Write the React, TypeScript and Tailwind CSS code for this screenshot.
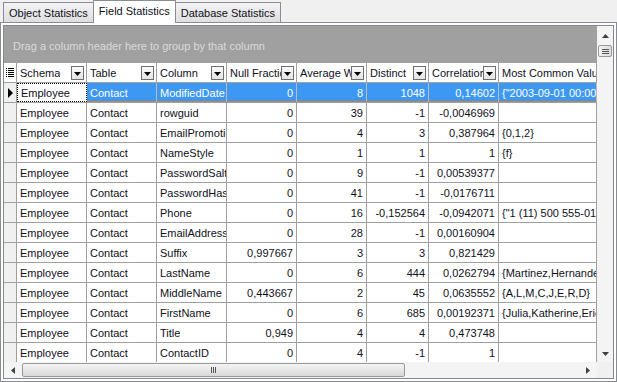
import React from 'react'

type Col = { key: string; title: string; w: string; right?: boolean }

const columns: Col[] = [
  { key: 'schema', title: 'Schema', w: 'w-[70px]' },
  { key: 'table', title: 'Table', w: 'w-[70px]' },
  { key: 'column', title: 'Column', w: 'w-[70px]' },
  { key: 'nullf', title: 'Null Fraction', w: 'w-[70px]', right: true },
  { key: 'avg', title: 'Average Width', w: 'w-[70px]', right: true },
  { key: 'distinct', title: 'Distinct', w: 'w-[62px]', right: true },
  { key: 'corr', title: 'Correlation', w: 'w-[70px]', right: true },
  { key: 'mcv', title: 'Most Common Values', w: 'w-[98px]' },
]

const rows: string[][] = [
  ['Employee', 'Contact', 'ModifiedDate', '0', '8', '1048', '0,14602', '{"2003-09-01 00:00:00"}'],
  ['Employee', 'Contact', 'rowguid', '0', '39', '-1', '-0,0046969', ''],
  ['Employee', 'Contact', 'EmailPromotion', '0', '4', '3', '0,387964', '{0,1,2}'],
  ['Employee', 'Contact', 'NameStyle', '0', '1', '1', '1', '{f}'],
  ['Employee', 'Contact', 'PasswordSalt', '0', '9', '-1', '0,00539377', ''],
  ['Employee', 'Contact', 'PasswordHash', '0', '41', '-1', '-0,0176711', ''],
  ['Employee', 'Contact', 'Phone', '0', '16', '-0,152564', '-0,0942071', '{"1 (11) 500 555-0110"}'],
  ['Employee', 'Contact', 'EmailAddress', '0', '28', '-1', '0,00160904', ''],
  ['Employee', 'Contact', 'Suffix', '0,997667', '3', '3', '0,821429', ''],
  ['Employee', 'Contact', 'LastName', '0', '6', '444', '0,0262794', '{Martinez,Hernandez}'],
  ['Employee', 'Contact', 'MiddleName', '0,443667', '2', '45', '0,0635552', '{A,L,M,C,J,E,R,D}'],
  ['Employee', 'Contact', 'FirstName', '0', '6', '685', '0,00192371', '{Julia,Katherine,Eric}'],
  ['Employee', 'Contact', 'Title', '0,949', '4', '4', '0,473748', ''],
  ['Employee', 'Contact', 'ContactID', '0', '4', '-1', '1', ''],
]

function DropButton() {
  return (
    <div className="ml-auto mr-[2px] flex h-[14px] w-[13px] shrink-0 items-end justify-center border border-[#6f6f6f] bg-gradient-to-b from-[#fafafa] to-[#e4e4e4] pb-[3px]">
      <svg width="7" height="4" viewBox="0 0 7 4">
        <path d="M0 0h7L3.5 4z" fill="#000" />
      </svg>
    </div>
  )
}

function Tab({ label, active }: { label: string; active?: boolean }) {
  return active ? (
    <div className="relative z-10 -mb-px flex h-[23px] items-start border border-b-0 border-[#898c95] bg-white px-[5px] pt-[5px]">
      {label}
    </div>
  ) : (
    <div className="flex h-[20px] items-center border border-b-0 border-[#898c95] bg-gradient-to-b from-[#f3f3f3] to-[#dedede] px-[5px] pt-[2px] first:border-r-0 last:border-l-0">
      {label}
    </div>
  )
}

export default function App() {
  return (
    <div
      className="h-[382px] w-[617px] overflow-hidden bg-[#f0f0f0] text-[11px] leading-none text-[#10101c]"
      style={{ fontFamily: '"Liberation Sans", Arial, sans-serif' }}
    >
      {/* Tabs */}
      <div className="flex h-[22px] items-end pl-[3px]">
        <Tab label="Object Statistics" />
        <Tab label="Field Statistics" active />
        <Tab label="Database Statistics" />
      </div>

      {/* Panel */}
      <div className="h-[360px] border border-[#898c95] bg-white p-[2px]">
        <div className="flex h-full flex-col border border-[#828790] bg-white">
          <div className="flex min-h-0 flex-1">
            <div className="flex min-w-0 flex-1 flex-col overflow-hidden">
              {/* Group panel */}
              <div className="flex h-[37px] shrink-0 items-center bg-[#a0a0a0] pl-[9px] pt-[4px] text-[#dadada]">
                Drag a column header here to group by that column
              </div>

              {/* Header */}
              <div className="flex h-[20px] shrink-0 border-b border-[#a0a0a0] bg-white">
                <div className="flex w-[13px] shrink-0 items-center justify-center border-r border-[#a0a0a0]">
                  <svg width="8" height="10" viewBox="0 0 8 10">
                    {[0, 2, 4, 6, 8].map((y) => (
                      <g key={y}>
                        <rect x="0" y={y} width="1" height="1" fill="#000" />
                        <rect x="2" y={y} width="6" height="1" fill="#000" />
                      </g>
                    ))}
                  </svg>
                </div>
                {columns.map((c) => (
                  <div
                    key={c.key}
                    className={`${c.w} flex shrink-0 items-center overflow-hidden border-r border-[#a0a0a0] pl-[3px]`}
                  >
                    <span className="min-w-0 overflow-hidden whitespace-nowrap pt-[2px]">{c.title}</span>
                    {c.key !== 'mcv' && <DropButton />}
                  </div>
                ))}
              </div>

              {/* Rows */}
              <div className="min-h-0 flex-1 overflow-hidden">
                {rows.map((r, i) => {
                  const sel = i === 0
                  return (
                    <div key={i} className="flex h-[20px] border-b border-[#a0a0a0]">
                      <div className="flex w-[13px] shrink-0 items-center justify-center border-r border-[#a0a0a0] bg-[#f0f0f0]">
                        {sel && (
                          <svg width="5" height="10" viewBox="0 0 5 10">
                            <path d="M0 0l5 5-5 5z" fill="#000" />
                          </svg>
                        )}
                      </div>
                      {columns.map((c, j) => {
                        const focus = sel && j === 0
                        const hl = sel && j > 0
                        return (
                          <div
                            key={c.key}
                            className={`${c.w} flex shrink-0 items-center overflow-hidden whitespace-nowrap border-r pt-[2px] ${
                              c.right ? 'justify-end pr-[3px]' : 'pl-[3px]'
                            } ${
                              focus
                                ? 'border border-dotted border-black bg-white'
                                : hl
                                ? 'border-b border-b-dotted border-[#bcbcbc] border-b-[#c8843c] bg-[#3d98f3] text-white'
                                : 'border-[#a0a0a0]'
                            }`}
                          >
                            {r[j]}
                          </div>
                        )
                      })}
                    </div>
                  )
                })}
              </div>
            </div>

            {/* Vertical scrollbar */}
            <div className="flex w-[16px] shrink-0 flex-col items-center bg-[#f4f4f4]">
              <svg className="mt-[8px]" width="7" height="4" viewBox="0 0 7 4">
                <path d="M3.5 0L7 4H0z" fill="#404040" />
              </svg>
              <div className="mt-[7px] flex h-[12px] w-[14px] flex-col items-center justify-center gap-[1px] rounded-[2px] border border-[#9a9a9a] bg-gradient-to-r from-[#f2f2f2] to-[#dcdcdc]">
                <div className="h-px w-[7px] bg-[#555]" />
                <div className="h-px w-[7px] bg-[#555]" />
                <div className="h-px w-[7px] bg-[#555]" />
              </div>
              <svg className="mb-[6px] mt-auto" width="7" height="4" viewBox="0 0 7 4">
                <path d="M0 0h7L3.5 4z" fill="#404040" />
              </svg>
            </div>
          </div>

          {/* Horizontal scrollbar */}
          <div className="flex h-[16px] shrink-0">
            <div className="flex flex-1 items-center bg-[#f4f4f4] pl-[7px] pr-[7px]">
              <svg width="4" height="7" viewBox="0 0 4 7">
                <path d="M0 3.5L4 0v7z" fill="#404040" />
              </svg>
              <div className="ml-[7px] flex h-[14px] w-[383px] items-center justify-center gap-[1px] rounded-[2px] border border-[#9a9a9a] bg-gradient-to-b from-[#f5f5f5] to-[#d8d8d8]">
                <div className="h-[6px] w-px bg-[#555]" />
                <div className="h-[6px] w-px bg-[#555]" />
                <div className="h-[6px] w-px bg-[#555]" />
              </div>
              <svg className="ml-auto" width="4" height="7" viewBox="0 0 4 7">
                <path d="M0 0l4 3.5L0 7z" fill="#404040" />
              </svg>
            </div>
            <div className="w-[16px] shrink-0 bg-[#f0f0f0]" />
          </div>
        </div>
      </div>
    </div>
  )
}
